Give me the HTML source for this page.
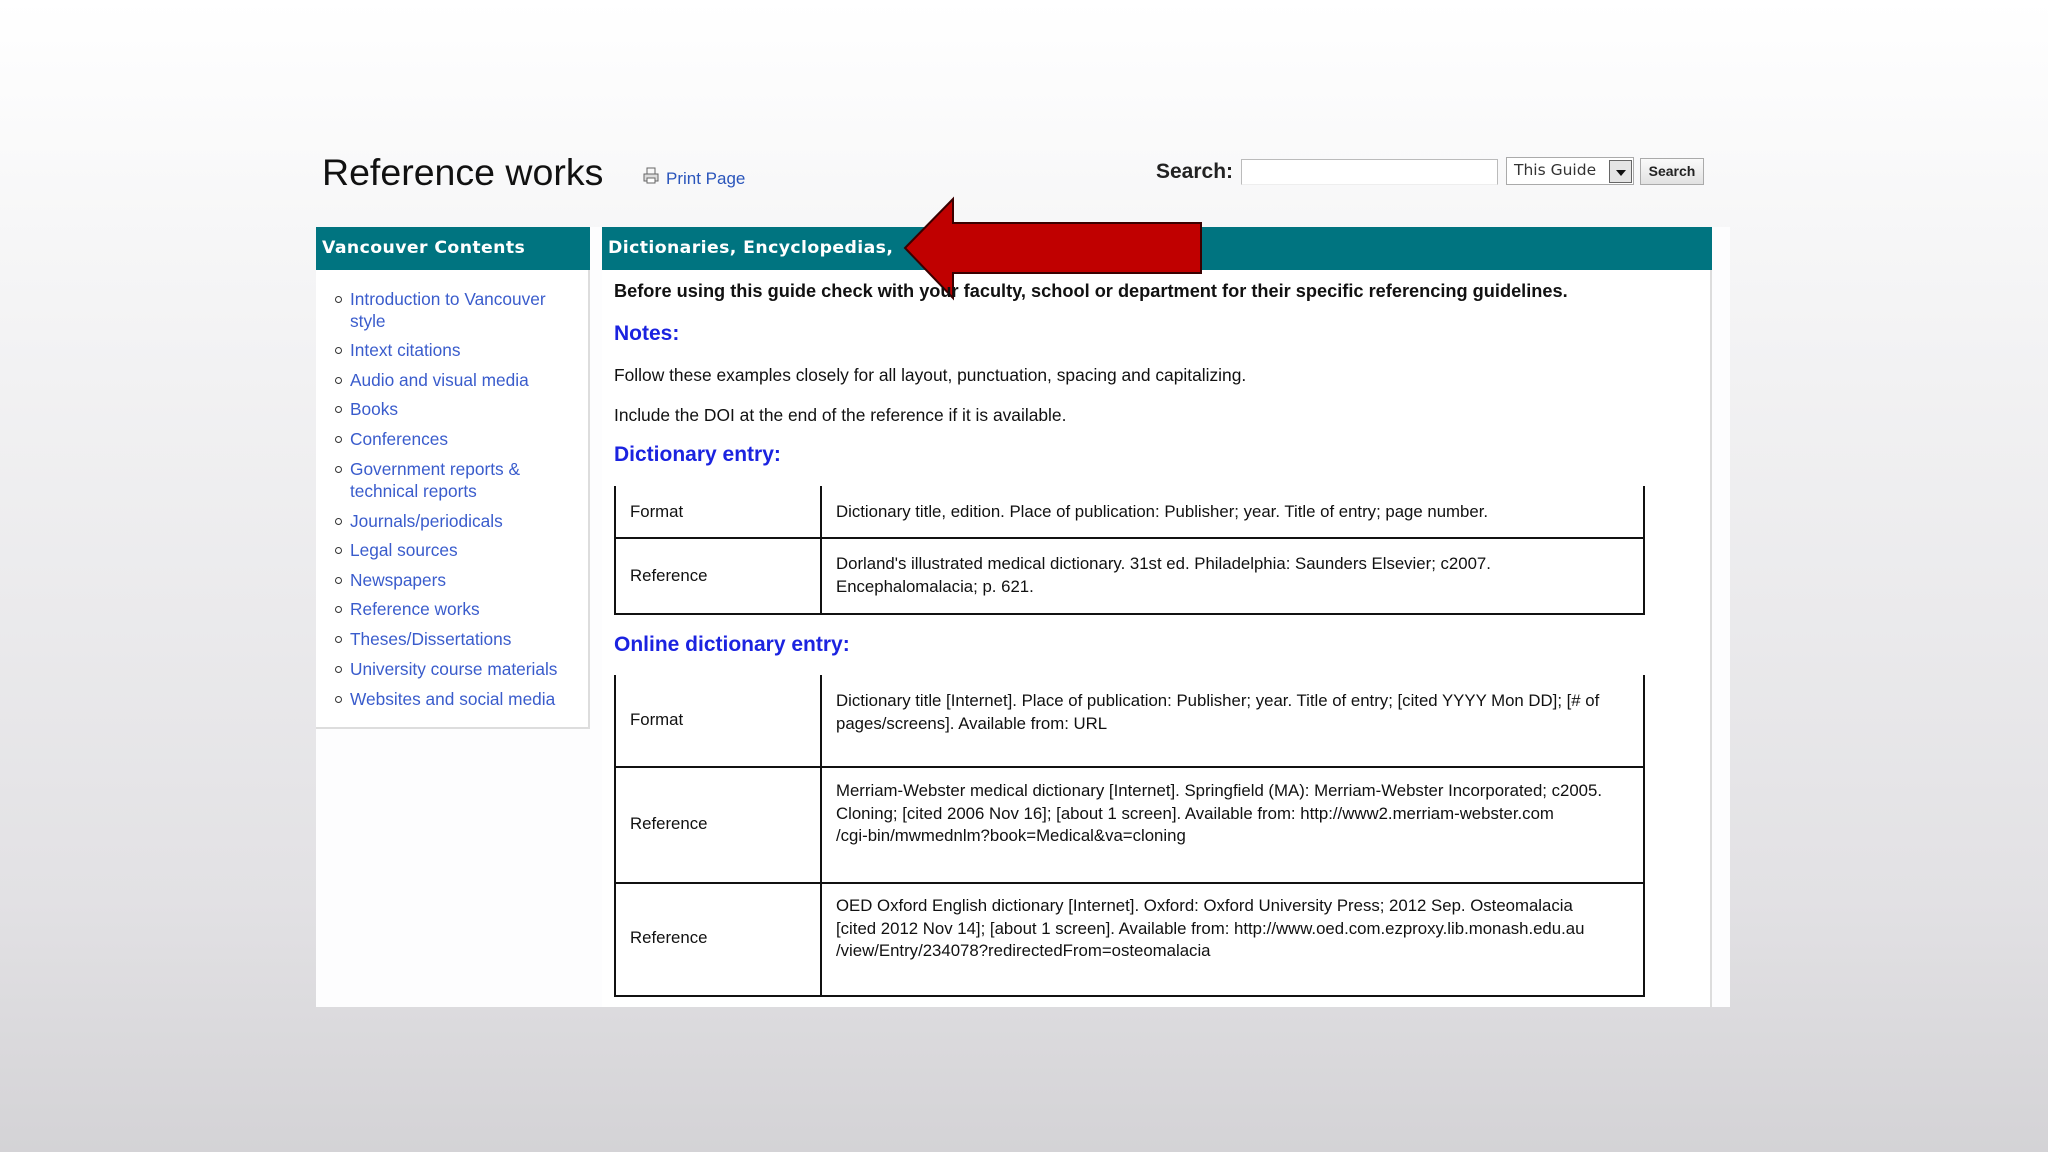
<!DOCTYPE html>
<html><head><meta charset="utf-8"><style>
*{margin:0;padding:0;box-sizing:border-box}
body{width:2048px;height:1152px;overflow:hidden;position:relative;background:linear-gradient(#ffffff 0px,#f4f4f5 300px,#e2e1e4 900px,#d4d3d6 1152px);font-family:"Liberation Sans",Arial,sans-serif}
.a{position:absolute;white-space:nowrap}
.t{font-size:17px;color:#111;line-height:22.5px}
.tt{font-size:16.8px}
.h{color:#1b23e0;font-weight:bold;font-size:21px}
.side{color:#3a5ccc;font-size:17.3px;line-height:22px}
.bul{position:absolute;width:7px;height:7px;border:1.5px solid #333;border-radius:50%}
.bar{position:absolute;background:#007480;color:#fff;font-weight:bold;line-height:43px;padding-left:6px;letter-spacing:0.4px;font-family:"DejaVu Sans","Liberation Sans",sans-serif;font-size:17.3px}
.tb{position:absolute;border:2px solid #111;border-top:none}
.hl{position:absolute;height:2px;background:#111}
.vl{position:absolute;width:1.5px;background:#111}
</style></head><body>
<div class="a" style="left:316px;top:227px;width:1414px;height:780px;background:#fdfdfe"></div>
<div class="a" style="left:316px;top:227px;width:274px;height:502px;border-right:2px solid #ddd;border-bottom:2px solid #ddd;background:#fff"></div>
<div class="a" style="left:602px;top:227px;width:1110px;height:780px;border-right:2px solid #ddd;background:#fff"></div>

<div class="a" style="left:322px;top:151px;font-size:37.5px;color:#111">Reference works</div>
<svg class="a" style="left:643px;top:167px" width="16" height="17" viewBox="0 0 16 17"><rect x="4" y="1" width="8" height="7" fill="none" stroke="#666"/><rect x="1" y="7" width="14" height="7" fill="#ddd" stroke="#666"/><rect x="4" y="11" width="8" height="5" fill="#fff" stroke="#666"/></svg>
<div class="a" style="left:666px;top:169px;font-size:17px;color:#2a55bb">Print Page</div>

<div class="a" style="left:1156px;top:160px;font-size:21px;font-weight:bold;color:#222">Search:</div>
<div class="a" style="left:1241px;top:159px;width:257px;height:26px;border:1px solid #bbb;border-bottom-color:#eee;background:#fff"></div>
<div class="a" style="left:1506px;top:157px;width:128px;height:28px;border:1px solid #aaa;background:#fff;color:#333;padding:3px 0 0 7px;font-family:'DejaVu Sans',sans-serif;font-size:15.5px">This Guide</div>
<div class="a" style="left:1609px;top:160px;width:23px;height:23px;border:1px solid #666;background:#e4e4e4"><div style="position:absolute;left:6px;top:9px;border-left:5px solid transparent;border-right:5px solid transparent;border-top:6px solid #111"></div></div>
<div class="a" style="left:1640px;top:158px;width:64px;height:27px;border:1px solid #aaa;background:linear-gradient(#fafafa,#e2e2e2);font-size:14px;font-weight:bold;text-align:center;line-height:25px;color:#222">Search</div>

<div class="bar" style="left:316px;top:227px;width:274px;height:43px">Vancouver Contents</div>
<div class="bar" style="left:602px;top:227px;width:1110px;height:43px">Dictionaries, Encyclopedias,</div>

<svg class="a" style="left:900px;top:195px" width="306" height="108"><polygon points="5,53 53,4 53,28 301,28 301,78 53,78 53,103" fill="#c00000" stroke="#3a0000" stroke-width="2"/></svg>

<div class="bul" style="left:335px;top:296px"></div><div class="a side" style="left:350px;top:288px">Introduction to Vancouver<br>style</div>
<div class="bul" style="left:335px;top:347px"></div><div class="a side" style="left:350px;top:339px">Intext citations</div>
<div class="bul" style="left:335px;top:377px"></div><div class="a side" style="left:350px;top:369px">Audio and visual media</div>
<div class="bul" style="left:335px;top:406px"></div><div class="a side" style="left:350px;top:398px">Books</div>
<div class="bul" style="left:335px;top:436px"></div><div class="a side" style="left:350px;top:428px">Conferences</div>
<div class="bul" style="left:335px;top:466px"></div><div class="a side" style="left:350px;top:458px">Government reports &amp;<br>technical reports</div>
<div class="bul" style="left:335px;top:518px"></div><div class="a side" style="left:350px;top:510px">Journals/periodicals</div>
<div class="bul" style="left:335px;top:547px"></div><div class="a side" style="left:350px;top:539px">Legal sources</div>
<div class="bul" style="left:335px;top:577px"></div><div class="a side" style="left:350px;top:569px">Newspapers</div>
<div class="bul" style="left:335px;top:606px"></div><div class="a side" style="left:350px;top:598px">Reference works</div>
<div class="bul" style="left:335px;top:636px"></div><div class="a side" style="left:350px;top:628px">Theses/Dissertations</div>
<div class="bul" style="left:335px;top:666px"></div><div class="a side" style="left:350px;top:658px">University course materials</div>
<div class="bul" style="left:335px;top:696px"></div><div class="a side" style="left:350px;top:688px">Websites and social media</div>

<div class="a t" style="left:614px;top:280px;font-weight:bold;font-size:18.2px">Before using this guide check with your faculty, school or department for their specific referencing guidelines.</div>
<div class="a h" style="left:614px;top:322px">Notes:</div>
<div class="a t" style="left:614px;top:364px;font-size:17.4px">Follow these examples closely for all layout, punctuation, spacing and capitalizing.</div>
<div class="a t" style="left:614px;top:404px;font-size:17.4px">Include the DOI at the end of the reference if it is available.</div>
<div class="a h" style="left:614px;top:443px">Dictionary entry:</div>

<div class="tb" style="left:614px;top:486px;width:1031px;height:129px"></div>
<div class="vl" style="left:820px;top:486px;height:128px"></div>
<div class="hl" style="left:614px;top:537px;width:1031px"></div>
<div class="a t tt" style="left:630px;top:501px">Format</div>
<div class="a t tt" style="left:836px;top:501px">Dictionary title, edition. Place of publication: Publisher; year. Title of entry; page number.</div>
<div class="a t tt" style="left:630px;top:565px">Reference</div>
<div class="a t tt" style="left:836px;top:553px">Dorland's illustrated medical dictionary. 31st ed. Philadelphia: Saunders Elsevier; c2007.<br>Encephalomalacia; p. 621.</div>

<div class="a h" style="left:614px;top:633px">Online dictionary entry:</div>

<div class="tb" style="left:614px;top:675px;width:1031px;height:322px"></div>
<div class="vl" style="left:820px;top:675px;height:321px"></div>
<div class="hl" style="left:614px;top:766px;width:1031px"></div>
<div class="hl" style="left:614px;top:882px;width:1031px"></div>
<div class="a t tt" style="left:630px;top:709px">Format</div>
<div class="a t tt" style="left:836px;top:690px">Dictionary title [Internet]. Place of publication: Publisher; year. Title of entry; [cited YYYY Mon DD]; [# of<br>pages/screens]. Available from: URL</div>
<div class="a t tt" style="left:630px;top:813px">Reference</div>
<div class="a t tt" style="left:836px;top:780px">Merriam-Webster medical dictionary [Internet]. Springfield (MA): Merriam-Webster Incorporated; c2005.<br>Cloning; [cited 2006 Nov 16]; [about 1 screen]. Available from: http://www2.merriam-webster.com<br>/cgi-bin/mwmednlm?book=Medical&amp;va=cloning</div>
<div class="a t tt" style="left:630px;top:927px">Reference</div>
<div class="a t tt" style="left:836px;top:895px">OED Oxford English dictionary [Internet]. Oxford: Oxford University Press; 2012 Sep. Osteomalacia<br>[cited 2012 Nov 14]; [about 1 screen]. Available from: http://www.oed.com.ezproxy.lib.monash.edu.au<br>/view/Entry/234078?redirectedFrom=osteomalacia</div>
</body></html>
